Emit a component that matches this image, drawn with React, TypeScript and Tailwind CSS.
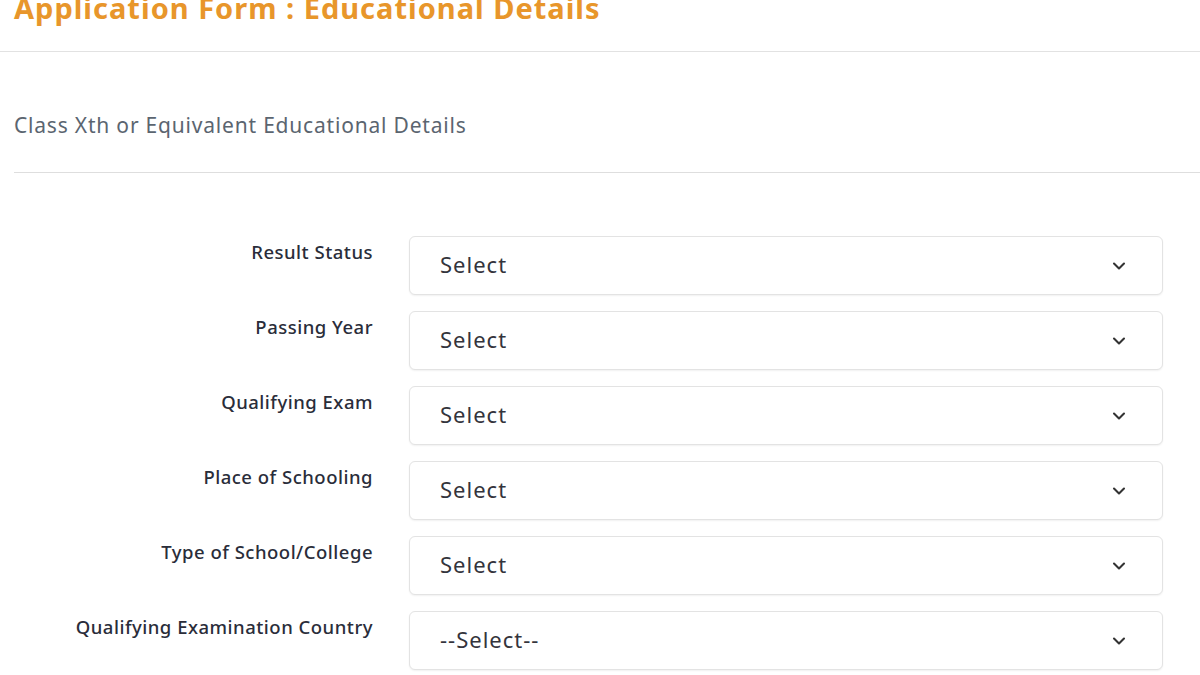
import { ChevronDown } from "lucide-react";

const fields = [
  { label: "Result Status", placeholder: "Select" },
  { label: "Passing Year", placeholder: "Select" },
  { label: "Qualifying Exam", placeholder: "Select" },
  { label: "Place of Schooling", placeholder: "Select" },
  { label: "Type of School/College", placeholder: "Select" },
  { label: "Qualifying Examination Country", placeholder: "--Select--" },
];

function SelectRow({ label, placeholder }: { label: string; placeholder: string }) {
  return (
    <div className="flex items-start">
      <label className="w-[373px] shrink-0 pt-[2px] text-right text-[18.5px] font-medium tracking-[0.5px] text-[#2a2d3a]">
        {label}
      </label>
      <div className="ml-[36px] flex h-[59px] w-[754px] items-center justify-between rounded-[6px] border border-[#e3e3e3] bg-white pl-[30px] pr-[33px] shadow-[0_1px_2px_rgba(0,0,0,0.06)]">
        <span className="pb-[3px] text-[22px] tracking-[1px] text-[#34343c]">{placeholder}</span>
        <ChevronDown className="h-[20px] w-[20px] text-[#333]" strokeWidth={2.5} />
      </div>
    </div>
  );
}

export default function App() {
  return (
    <div className="min-h-screen overflow-hidden bg-white font-['Noto_Sans',sans-serif]">
      {/* Page header */}
      <div className="flex h-[52px] flex-col border-b border-[#e2e2e2] px-[14px]">
        <h1 className="-mt-[12px] text-[29px] font-bold leading-[40px] tracking-[1px] text-[#e8962b]">
          Application Form : Educational Details
        </h1>
      </div>

      {/* Section title */}
      <div className="pl-[14px]">
        <div className="border-b border-[#dedede] pt-[58px] pb-[32px]">
          <h2 className="text-[21px] leading-[30px] tracking-[0.8px] text-[#5b6570]">
            Class Xth or Equivalent Educational Details
          </h2>
        </div>
      </div>

      {/* Form */}
      <div className="mt-[63px] flex flex-col gap-[16px]">
        {fields.map((f) => (
          <SelectRow key={f.label} label={f.label} placeholder={f.placeholder} />
        ))}
      </div>
    </div>
  );
}
